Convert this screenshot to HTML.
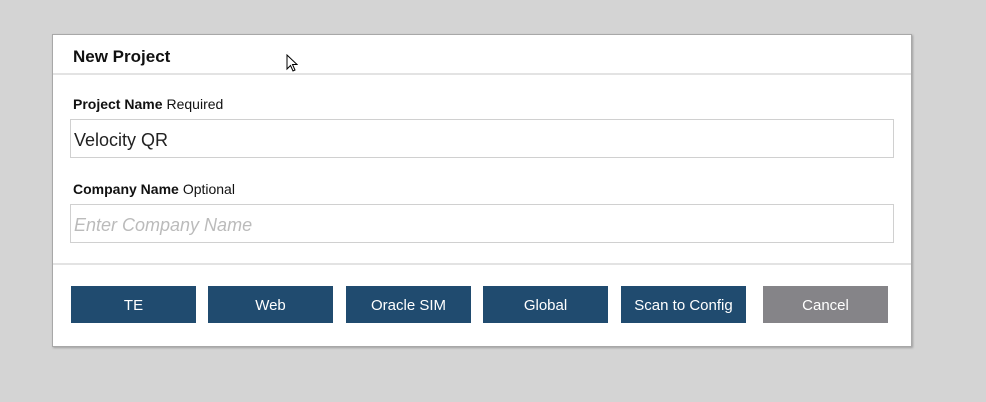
<!DOCTYPE html>
<html><head><style>
body{margin:0;width:986px;height:402px;background:#d4d4d4;font-family:"Liberation Sans",sans-serif;position:relative;overflow:hidden}
.dlg{position:absolute;left:52px;top:34px;width:858px;height:311px;background:#fff;border:1px solid #a8a8a8;box-shadow:1px 1px 2px rgba(0,0,0,.25)}
.t{position:absolute;left:20px;top:12px;font-size:17px;font-weight:bold;color:#111}
.hl{position:absolute;left:0;right:0;height:2px;background:#e3e3e3}
.lbl{position:absolute;left:20px;font-size:14px;color:#111}
.lbl b{margin-right:4px}
.inp{position:absolute;left:17px;width:819px;height:37px;border:1px solid #d0d0d0;font-size:18px;line-height:40px;padding-left:3px;box-sizing:content-box}
.btn{position:absolute;top:251px;width:125px;height:37px;background:#204b6f;color:#fff;font-size:15px;text-align:center;line-height:40px}
</style></head><body>
<div class="dlg">
<div class="t">New Project</div>
<div class="hl" style="top:38px"></div>
<div class="lbl" style="top:61px"><b>Project Name</b>Required</div>
<div class="inp" style="top:84px;color:#222">Velocity QR</div>
<div class="lbl" style="top:146px"><b>Company Name</b>Optional</div>
<div class="inp" style="top:169px;color:#bbb;font-style:italic">Enter Company Name</div>
<div class="hl" style="top:228px"></div>
<div class="btn" style="left:18px">TE</div>
<div class="btn" style="left:155px">Web</div>
<div class="btn" style="left:293px">Oracle SIM</div>
<div class="btn" style="left:430px">Global</div>
<div class="btn" style="left:568px">Scan to Config</div>
<div class="btn" style="left:710px;background:#858488">Cancel</div>
</div>
<svg style="position:absolute;left:286px;top:54px" width="12" height="19" viewBox="0 0 12 19"><path d="M1 1 L1 15 L4.5 11.5 L7 17 L9 16 L6.5 10.5 L11 10.5 Z" fill="#fff" stroke="#000" stroke-width="1"/></svg>
</body></html>
